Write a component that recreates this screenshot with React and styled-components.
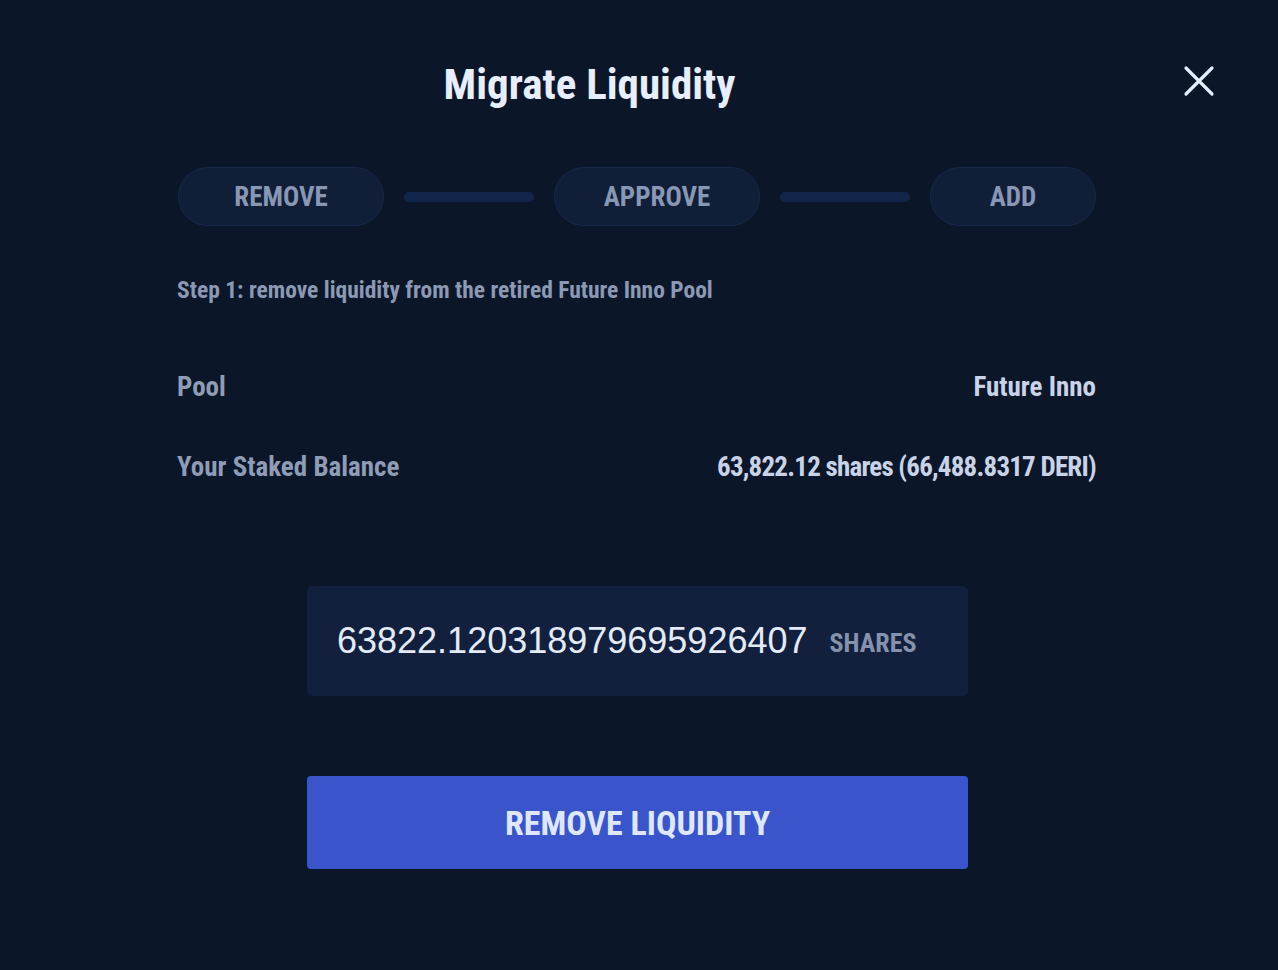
import React from "react"
import styled, { createGlobalStyle } from "styled-components"

const GlobalStyle = createGlobalStyle`
  html, body {
    margin: 0;
    padding: 0;
    background: #0b1629;
  }
  body {
    font-family: "Roboto Condensed", Roboto, sans-serif;
    font-stretch: condensed;
  }
`

const Modal = styled.div`
  width: 1278px;
  height: 970px;
  box-sizing: border-box;
  background: #0b1629;
  padding-top: 56px;
`

const Header = styled.div`
  display: flex;
  align-items: center;
  height: 56px;
  padding-right: 59px;
`

const Title = styled.h1`
  flex: 1;
  margin: 0;
  text-align: center;
  font-size: 43px;
  line-height: 56px;
  font-weight: 700;
  color: #e6eeff;
`

const CloseButton = styled.button`
  width: 40px;
  height: 40px;
  padding: 0;
  border: none;
  background: transparent;
  cursor: pointer;
  display: flex;
  align-items: center;
  justify-content: center;
  margin-top: -6px;
`

const Body = styled.div`
  width: 919px;
  margin-left: 177px;
`

const Steps = styled.div`
  display: flex;
  align-items: center;
  gap: 20px;
  margin: 55px 0 0 1px;
`

const StepPill = styled.div`
  width: ${p => p.$width}px;
  height: 59px;
  box-sizing: border-box;
  border-radius: 30px;
  background: #111e38;
  border: 1px solid #18284a;
  display: flex;
  align-items: center;
  justify-content: center;
  font-size: 27px;
  font-weight: 700;
  color: #8797b4;
`

const Connector = styled.div`
  width: 130px;
  height: 10px;
  border-radius: 5px;
  background: #13244a;
`

const StepNote = styled.p`
  margin: 49px 0 0;
  font-size: 23.5px;
  line-height: 30px;
  font-weight: 700;
  color: #8c99b3;
`

const InfoList = styled.div`
  margin-top: 65px;
  display: flex;
  flex-direction: column;
  gap: 46px;
`

const InfoRow = styled.div`
  display: flex;
  justify-content: space-between;
  align-items: center;
  font-size: 27px;
  line-height: 34px;
  font-weight: 700;
  color: #8f9cb6;
`

const Value = styled.span`
  color: #c8d3e8;
  letter-spacing: ${p => (p.$tight ? "-0.78px" : "0")};
`

const Form = styled.div`
  width: 661px;
  margin: 102px 0 0 130px;
  display: flex;
  flex-direction: column;
  gap: 80px;
`

const AmountBox = styled.div`
  height: 110px;
  border-radius: 6px;
  background: #12203e;
  display: flex;
  align-items: center;
  padding: 0 30px;
  gap: 22px;
`

const Amount = styled.span`
  font-family: "Liberation Sans", Arial, sans-serif;
  font-stretch: normal;
  font-size: 36px;
  color: #e3ebf8;
`

const Unit = styled.span`
  font-size: 26px;
  font-weight: 700;
  color: #8492ad;
  margin-top: 4px;
`

const SubmitButton = styled.button`
  height: 93px;
  border: none;
  border-radius: 4px;
  background: #3a55cc;
  color: #dfe7ff;
  font-family: inherit;
  font-stretch: condensed;
  font-size: 34px;
  font-weight: 700;
  cursor: pointer;
`

const steps = [
  { label: "REMOVE", width: 206 },
  { label: "APPROVE", width: 206 },
  { label: "ADD", width: 166 },
]

export default function App() {
  return (
    <Modal>
      <GlobalStyle />
      <Header>
        <Title>Migrate Liquidity</Title>
        <CloseButton aria-label="close">
          <svg width="32" height="32" viewBox="0 0 32 32">
            <path d="M3 3 L29 29 M29 3 L3 29" stroke="#e6eeff" strokeWidth="3.2" strokeLinecap="round" />
          </svg>
        </CloseButton>
      </Header>
      <Body>
        <Steps>
          {steps.map((s, i) => (
            <React.Fragment key={s.label}>
              {i > 0 && <Connector />}
              <StepPill $width={s.width}>{s.label}</StepPill>
            </React.Fragment>
          ))}
        </Steps>
        <StepNote>Step 1: remove liquidity from the retired Future Inno Pool</StepNote>
        <InfoList>
          <InfoRow>
            <span>Pool</span>
            <Value>Future Inno</Value>
          </InfoRow>
          <InfoRow>
            <span>Your Staked Balance</span>
            <Value $tight>63,822.12 shares (66,488.8317 DERI)</Value>
          </InfoRow>
        </InfoList>
        <Form>
          <AmountBox>
            <Amount>63822.120318979695926407</Amount>
            <Unit>SHARES</Unit>
          </AmountBox>
          <SubmitButton>REMOVE LIQUIDITY</SubmitButton>
        </Form>
      </Body>
    </Modal>
  )
}
